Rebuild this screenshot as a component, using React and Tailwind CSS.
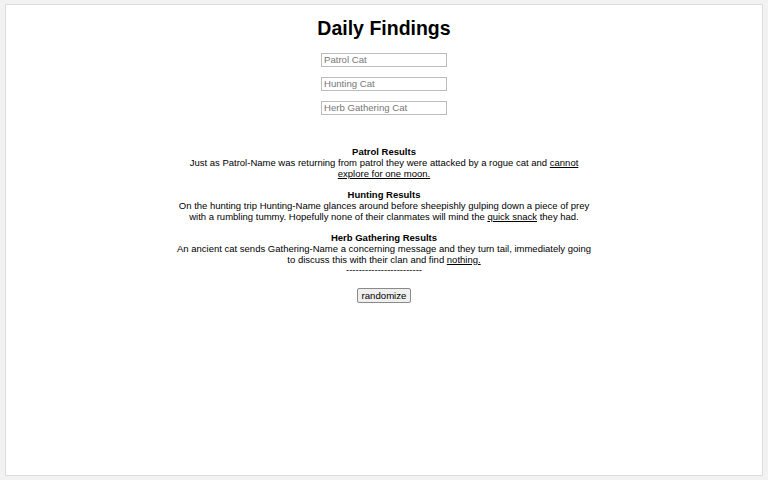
import React from 'react';

const results = [
  {
    title: 'Patrol Results',
    text: 'Just as Patrol-Name was returning from patrol they were attacked by a rogue cat and ',
    link: 'cannot explore for one moon.',
  },
  {
    title: 'Hunting Results',
    text: 'On the hunting trip Hunting-Name glances around before sheepishly gulping down a piece of prey with a rumbling tummy. Hopefully none of their clanmates will mind the ',
    link: 'quick snack',
    after: ' they had.',
  },
  {
    title: 'Herb Gathering Results',
    text: 'An ancient cat sends Gathering-Name a concerning message and they turn tail, immediately going to discuss this with their clan and find ',
    link: 'nothing.',
  },
];

export default function App() {
  return (
    <div className="min-h-screen bg-[#f2f2f2] p-[4px_5px_4px_5px] font-['Liberation_Sans',Arial,sans-serif] text-black">
      <div className="h-[472px] border border-[#dcdcdc] bg-white flex flex-col items-center">
        {/* Title */}
        <h1 className="mt-[12px] text-[19.5px] font-bold leading-[22px]">Daily Findings</h1>

        {/* Cat name inputs */}
        <div className="mt-[14px] flex flex-col gap-[10px]">
          <input
            placeholder="Patrol Cat"
            className="h-[14px] w-[126px] border border-[#bdbdbd] px-[2px] text-[9.6px] placeholder:text-[#777] outline-none"
          />
          <input
            placeholder="Hunting Cat"
            className="h-[14px] w-[126px] border border-[#bdbdbd] px-[2px] text-[9.6px] placeholder:text-[#777] outline-none"
          />
          <input
            placeholder="Herb Gathering Cat"
            className="h-[14px] w-[126px] border border-[#bdbdbd] px-[2px] text-[9.6px] placeholder:text-[#777] outline-none"
          />
        </div>

        {/* Results */}
        <div className="mt-[32px] w-[420px] text-center text-[9.5px] leading-[10.75px]">
          {results.map((r, i) => (
            <div key={r.title} className={i > 0 ? 'mt-[10.75px]' : ''}>
              <div className="font-bold">{r.title}</div>
              <div>
                {r.text}
                <span className="underline">{r.link}</span>
                {r.after}
              </div>
            </div>
          ))}
          <div>------------------------</div>
        </div>

        <button className="mt-[12px] h-[15px] border border-[#8a8a8a] rounded-[2px] bg-[#efefef] px-[4px] text-[9.6px] leading-none">
          randomize
        </button>
      </div>
    </div>
  );
}
